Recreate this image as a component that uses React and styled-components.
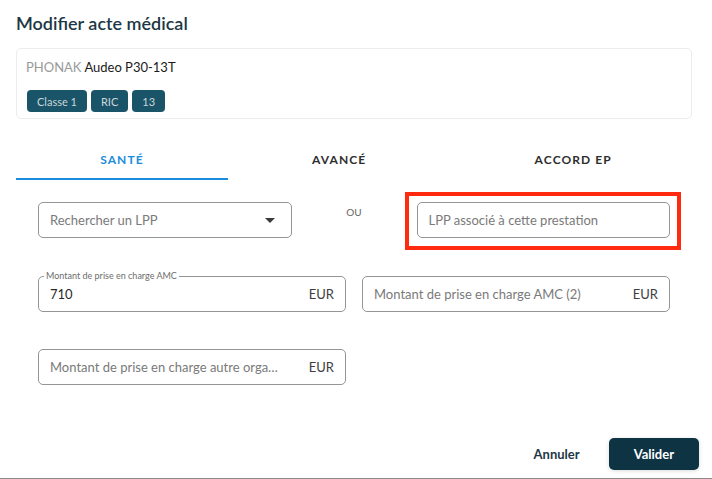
import React from "react";
import styled, { createGlobalStyle } from "styled-components";

const GlobalStyle = createGlobalStyle`
  body {
    margin: 0;
    background: #ffffff;
    font-family: Lato, "Noto Sans", "Liberation Sans", sans-serif;
  }
  * { box-sizing: border-box; }
`;

const Dialog = styled.div`
  width: 712px;
  height: 479px;
  display: flex;
  flex-direction: column;
  padding: 0 16px;
  background: #ffffff;
  border-bottom: 1px solid #8a8a8a;
`;

const Title = styled.h2`
  margin: 11px 0 13px;
  font-size: 18px;
  line-height: 24px;
  font-weight: 600;
  color: #1c3745;
`;

const ProductCard = styled.div`
  margin-right: 4px;
  border: 1px solid #ececec;
  border-radius: 5px;
  padding: 9px 9px 6px;
  .brand {
    color: #9a9a9a;
  }
  p {
    margin: 0;
    font-size: 13px;
    line-height: 18px;
    color: #1b1b1b;
  }
`;

const Chips = styled.div`
  display: flex;
  gap: 4px;
  margin-top: 14px;
  padding-left: 1px;
`;

const Chip = styled.span`
  height: 22px;
  padding: 0 10px;
  display: flex;
  align-items: center;
  border-radius: 4px;
  background: #1a5468;
  color: #cbd6db;
  font-size: 11px;
`;

const Tabs = styled.div`
  display: flex;
  margin-top: 22px;
`;

const Tab = styled.div`
  flex: 1 1 auto;
  padding: 0 16px;
  height: 39px;
  display: flex;
  align-items: center;
  justify-content: center;
  font-size: 12px;
  font-weight: 700;
  letter-spacing: 1.1px;
  color: ${(p) => (p.$active ? "#1b8cdb" : "#2e2e2e")};
  border-bottom: 2px solid ${(p) => (p.$active ? "#1b8cdb" : "transparent")};
`;

const Form = styled.div`
  padding: 22px 26px 0 22px;
  display: flex;
  flex-direction: column;
  gap: 38px;
`;

const SearchRow = styled.div`
  display: grid;
  grid-template-columns: minmax(0, 1fr) 125px minmax(0, 1fr);
  align-items: start;
`;

const Or = styled.div`
  text-align: center;
  padding-top: 4px;
  font-size: 10px;
  color: #666;
`;

const Grid = styled.div`
  display: grid;
  grid-template-columns: minmax(0, 1fr) minmax(0, 1fr);
  column-gap: 16px;
  row-gap: 37px;
`;

const Field = styled.div`
  position: relative;
  flex: 1;
  min-width: 0;
  height: 36px;
  display: flex;
  align-items: center;
  padding: 0 11px;
  border: 1px solid #959595;
  border-radius: 5px;
  font-size: 13px;
  color: ${(p) => (p.$filled ? "#2a2a2a" : "#7a7a7a")};
  span.text {
    flex: 1;
    min-width: 0;
    white-space: nowrap;
    overflow: hidden;
    text-overflow: ellipsis;
  }
  span.unit {
    margin-left: 28px;
    color: #3e3e3e;
  }
`;

const FloatLabel = styled.label`
  position: absolute;
  left: 5px;
  top: -7px;
  padding: 0 2px;
  background: #ffffff;
  font-size: 9px;
  line-height: 12px;
  color: #6d6d6d;
`;

const Highlight = styled.div`
  display: flex;
  margin: -10px -11px -12px -12px;
  padding: 6px 7px 8px 8px;
  border: 4px solid #ff2a10;
`;

const Caret = styled.span`
  width: 0;
  height: 0;
  border-left: 5px solid transparent;
  border-right: 5px solid transparent;
  border-top: 5px solid #3a3a3a;
  margin-right: 5px;
`;

const Actions = styled.div`
  margin-top: auto;
  display: flex;
  justify-content: flex-end;
  align-items: center;
  gap: 14px;
  margin-right: -3px;
  padding-bottom: 8px;
`;

const Button = styled.button`
  height: 32px;
  border: none;
  border-radius: 5px;
  font-family: inherit;
  font-size: 13px;
  font-weight: 700;
  padding: 0 ${(p) => (p.$primary ? "25px" : "15px")};
  background: ${(p) => (p.$primary ? "#0e3444" : "transparent")};
  color: ${(p) => (p.$primary ? "#ffffff" : "#1c3745")};
  box-shadow: ${(p) => (p.$primary ? "0 1px 4px rgba(0,0,0,0.15)" : "none")};
`;

const amounts = [
  { label: "Montant de prise en charge AMC", value: "710" },
  { placeholder: "Montant de prise en charge AMC (2)" },
  { placeholder: "Montant de prise en charge autre organisme" },
];

export default function App() {
  return (
    <Dialog>
      <GlobalStyle />
      <Title>Modifier acte médical</Title>
      <ProductCard>
        <p>
          <span className="brand">PHONAK</span> Audeo P30-13T
        </p>
        <Chips>
          <Chip>Classe 1</Chip>
          <Chip>RIC</Chip>
          <Chip>13</Chip>
        </Chips>
      </ProductCard>

      <Tabs>
        <Tab $active>SANTÉ</Tab>
        <Tab>AVANCÉ</Tab>
        <Tab>ACCORD EP</Tab>
      </Tabs>

      <Form>
        <SearchRow>
          <Field>
            <span className="text">Rechercher un LPP</span>
            <Caret />
          </Field>
          <Or>OU</Or>
          <Highlight>
            <Field>
              <span className="text">LPP associé à cette prestation</span>
            </Field>
          </Highlight>
        </SearchRow>

        <Grid>
          {amounts.map((a, i) => (
            <Field key={i} $filled={!!a.value}>
              {a.label && <FloatLabel>{a.label}</FloatLabel>}
              <span className="text">{a.value || a.placeholder}</span>
              <span className="unit">EUR</span>
            </Field>
          ))}
        </Grid>
      </Form>

      <Actions>
        <Button>Annuler</Button>
        <Button $primary>Valider</Button>
      </Actions>
    </Dialog>
  );
}
